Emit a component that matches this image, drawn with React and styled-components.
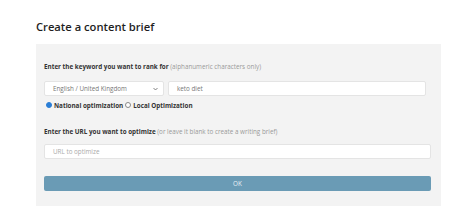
import React from "react";
import styled, { createGlobalStyle } from "styled-components";

const GlobalStyle = createGlobalStyle`
  html, body {
    margin: 0;
    padding: 0;
    background: #fff;
    font-family: "Open Sans", "Liberation Sans", sans-serif;
  }
`;

const Page = styled.div`
  padding: 19px 33px 0 36px;
  width: 474px;
  box-sizing: border-box;
`;

const Title = styled.h1`
  margin: 0 0 9px;
  font-size: 11.2px;
  font-weight: 600;
  color: #1e1e1e;
  line-height: 16px;
`;

const Panel = styled.div`
  background: #f3f3f3;
  padding: 18px 10px 15px 8px;
  display: flex;
  flex-direction: column;
`;

const Label = styled.div`
  font-size: 6.3px;
  font-weight: 700;
  color: #333;
  line-height: 9px;
  margin-bottom: ${(p) => p.$gap || 10}px;

  span {
    font-weight: 400;
    color: #9a9a9a;
  }
`;

const Row = styled.div`
  display: flex;
  gap: 4px;
  padding-right: 5px;
`;

const Field = styled.div`
  flex: ${(p) => p.$grow || "none"};
  height: 15px;
  background: #fff;
  border: 1px solid #e4e4e4;
  border-radius: 2px;
  box-sizing: border-box;
  display: flex;
  align-items: center;
  justify-content: space-between;
  padding: 0 5px 0 8px;
  font-size: 6.3px;
  color: ${(p) => (p.$muted ? "#aaa" : "#777")};
`;

const Radios = styled.div`
  display: flex;
  align-items: center;
  height: 9px;
  margin-top: 4.5px;
  margin-bottom: 17px;
  font-size: 6.3px;
  font-weight: 700;
  color: #333;
`;

const Radio = styled.span`
  width: 6px;
  height: 6px;
  border-radius: 50%;
  box-sizing: border-box;
  border: 1px solid ${(p) => (p.$checked ? "#2a7ed6" : "#888")};
  background: ${(p) => (p.$checked ? "#2a7ed6" : "#fff")};
  margin: 0 2px 0 2px;
`;

const Button = styled.div`
  height: 15px;
  margin-top: 17px;
  background: #6a9bb5;
  border-radius: 2px;
  color: #e8f0f5;
  font-size: 6.3px;
  display: flex;
  align-items: center;
  justify-content: center;
`;

const Chevron = () => (
  <svg width="5" height="4" viewBox="0 0 10 6">
    <path d="M1 1l4 4 4-4" fill="none" stroke="#666" strokeWidth="1.6" />
  </svg>
);

export default function App() {
  return (
    <Page>
      <GlobalStyle />
      <Title>Create a content brief</Title>
      <Panel>
        <Label>
          Enter the keyword you want to rank for{" "}
          <span>(alphanumeric characters only)</span>
        </Label>
        <Row>
          <Field $grow={114}>
            English / United Kingdom
            <Chevron />
          </Field>
          <Field $grow={264}>keto diet</Field>
        </Row>
        <Radios>
          <Radio $checked />
          National optimization
          <Radio />
          Local Optimization
        </Radios>
        <Label $gap={8.5}>
          Enter the URL you want to optimize{" "}
          <span>(or leave it blank to create a writing brief)</span>
        </Label>
        <Field $muted>URL to optimize</Field>
        <Button>OK</Button>
      </Panel>
    </Page>
  );
}
